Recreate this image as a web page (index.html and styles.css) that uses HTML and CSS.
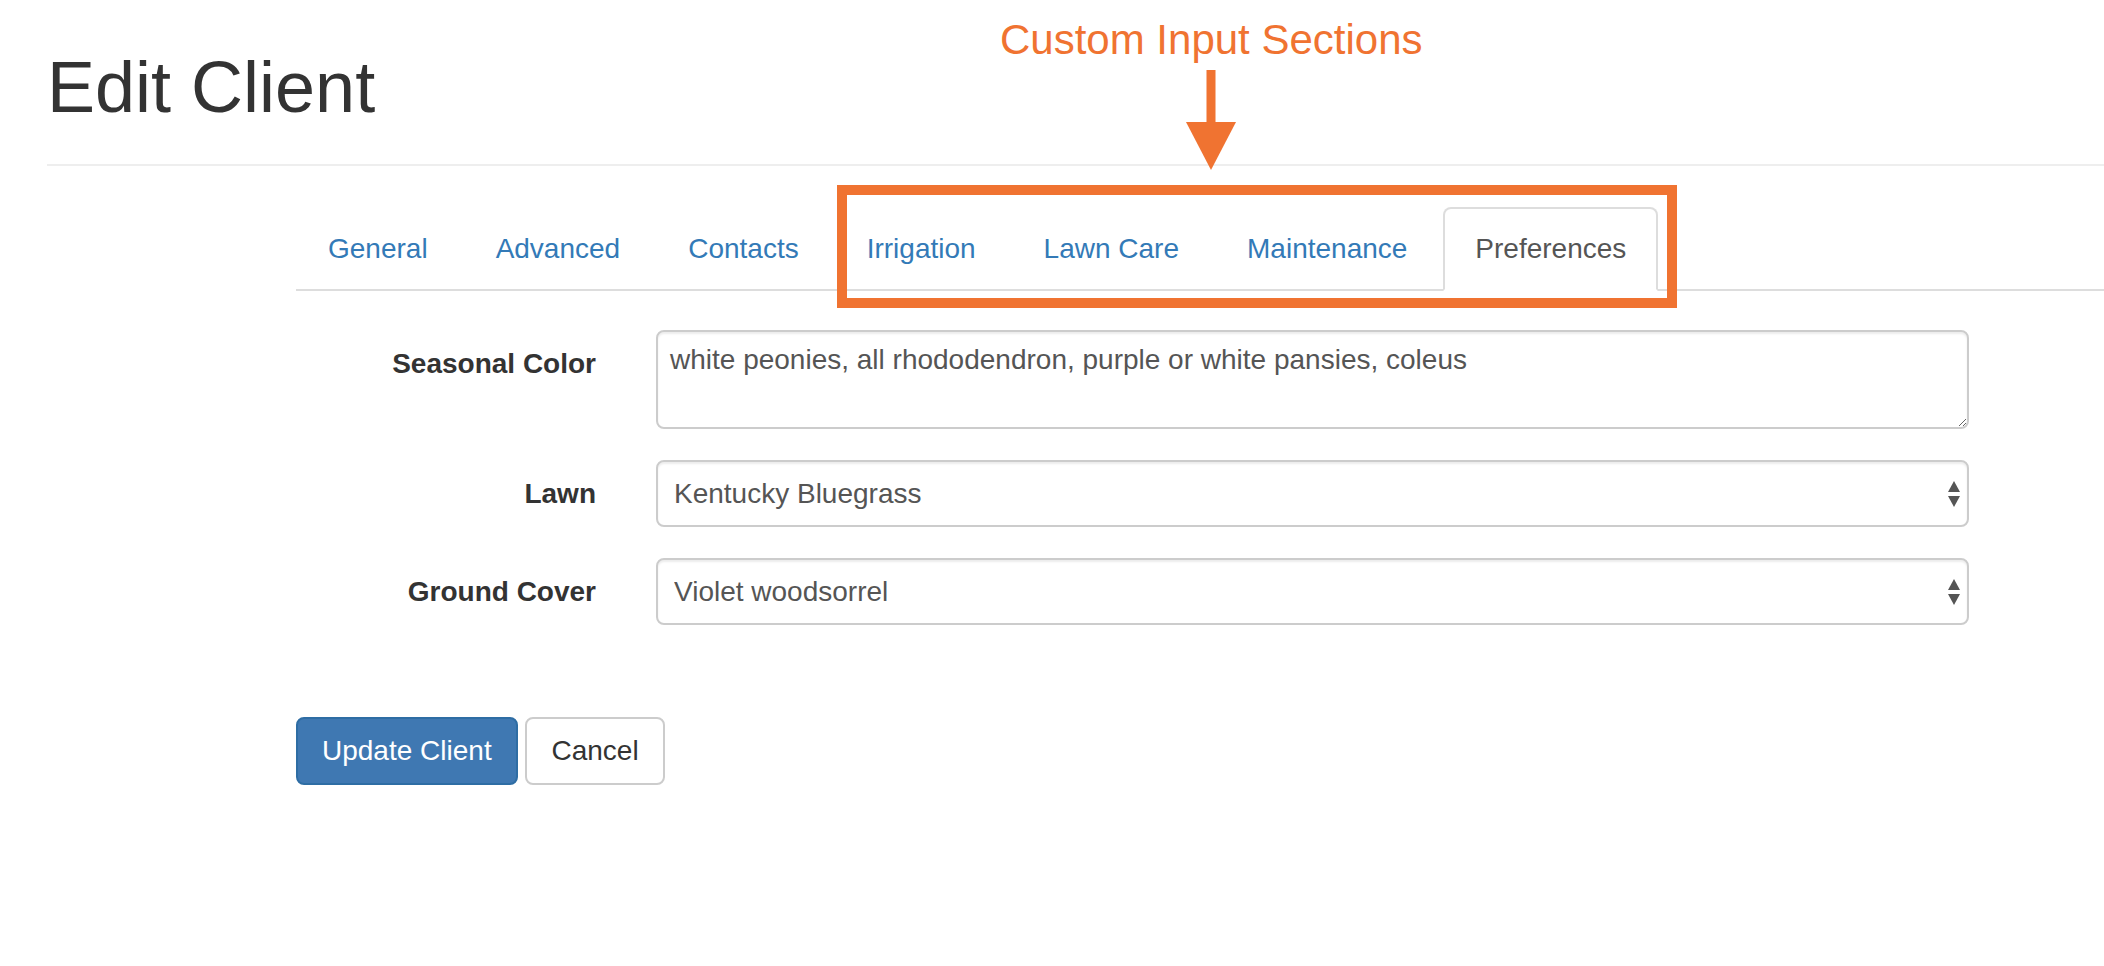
FILE: index.html
```html
<!DOCTYPE html>
<html>
  <head>
    <link rel="stylesheet" href="styles.css">
  </head>
  <body>
    <div class="page-header">
      <h1>Edit Client</h1>
    </div>
    <div class="content">
      <ul class="nav-tabs">
        <li><a href="#">General</a></li>
        <li><a href="#">Advanced</a></li>
        <li><a href="#">Contacts</a></li>
        <li><a href="#">Irrigation</a></li>
        <li><a href="#">Lawn Care</a></li>
        <li><a href="#">Maintenance</a></li>
        <li class="active"><a href="#">Preferences</a></li>
      </ul>
      <form class="client-form">
        <div class="form-row">
          <label for="seasonalColor">Seasonal Color</label>
          <textarea id="seasonalColor" class="form-control">white peonies, all rhododendron, purple or white pansies, coleus</textarea>
        </div>
        <div class="form-row">
          <label for="lawn">Lawn</label>
          <div class="select-wrap">
            <select id="lawn" class="form-control">
              <option>Kentucky Bluegrass</option>
            </select>
            <svg class="select-arrows" width="12" height="26" viewBox="0 0 12 26"><polygon points="6,0 12,11 0,11" /><polygon points="0,15 12,15 6,26" /></svg>
          </div>
        </div>
        <div class="form-row">
          <label for="groundCover">Ground Cover</label>
          <div class="select-wrap">
            <select id="groundCover" class="form-control">
              <option>Violet woodsorrel</option>
            </select>
            <svg class="select-arrows" width="12" height="26" viewBox="0 0 12 26"><polygon points="6,0 12,11 0,11" /><polygon points="0,15 12,15 6,26" /></svg>
          </div>
        </div>
        <div class="actions">
          <button type="submit" class="btn btn-primary">Update Client</button>
          <a href="#" class="btn btn-default">Cancel</a>
        </div>
      </form>
    </div>

    <!-- annotation layered over the screenshot -->
    <div class="callout-label">Custom Input Sections</div>
    <svg class="callout-arrow" width="50" height="100" viewBox="0 0 50 100">
      <rect x="20.5" y="0" width="9" height="53" />
      <polygon points="0,52 50,52 25,100" />
    </svg>
    <div class="callout-box"></div>
  </body>
</html>
```

FILE: styles.css
```css
body {
  margin: 0;
  position: relative;
  font-family: "Liberation Sans", Arial, sans-serif;
  font-size: 28px;
  line-height: 40px;
  color: #333;
  background: #fff;
}
.page-header {
  margin: 0 0 41px 47px;
  padding: 48px 0 17px 0;
  border-bottom: 2px solid #eee;
}
h1 {
  margin: 0 0 20px 0;
  font-size: 72px;
  line-height: 79px;
  font-weight: normal;
}
.content {
  padding-left: 296px;
}
.nav-tabs {
  display: flex;
  list-style: none;
  margin: 0;
  padding: 0;
  border-bottom: 2px solid #ddd;
}
.nav-tabs li {
  margin-bottom: -2px;
}
.nav-tabs a {
  display: block;
  padding: 20px 30px;
  margin-right: 4px;
  border: 2px solid transparent;
  border-radius: 8px 8px 0 0;
  color: #337ab7;
  text-decoration: none;
}
.nav-tabs .active a {
  color: #555;
  background: #fff;
  border-color: #ddd #ddd transparent;
}
.client-form {
  margin: 39px 135px 0 0;
}
.form-row {
  display: flex;
  margin-bottom: 31px;
}
.form-row label {
  width: 300px;
  margin-right: 60px;
  padding-top: 14px;
  text-align: right;
  font-weight: bold;
  flex-shrink: 0;
}
.form-control {
  display: block;
  box-sizing: border-box;
  width: 100%;
  font-family: inherit;
  font-size: 28px;
  line-height: 40px;
  color: #555;
  background: #fff;
  border: 2px solid #ccc;
  border-radius: 8px;
  box-shadow: inset 0 2px 2px rgba(0, 0, 0, 0.075);
  margin: 0;
}
textarea.form-control {
  flex: 1;
  height: 99px;
  padding: 8px 12px;
  resize: both;
}
.select-wrap {
  flex: 1;
  position: relative;
}
select.form-control {
  height: 67px;
  padding: 0 40px 0 16px;
  appearance: none;
  -webkit-appearance: none;
}
.select-arrows {
  position: absolute;
  right: 9px;
  top: 21px;
  fill: #555;
  pointer-events: none;
}
.actions {
  margin-top: 92px;
}
.btn {
  display: inline-block;
  box-sizing: border-box;
  padding: 12px 24px;
  font-family: inherit;
  font-size: 28px;
  line-height: 40px;
  border: 2px solid transparent;
  border-radius: 8px;
  text-decoration: none;
  vertical-align: middle;
  cursor: pointer;
}
.btn-primary {
  color: #fff;
  background: #3f78b2;
  border-color: #2e6da4;
}
.btn-default {
  color: #333;
  background: #fff;
  border-color: #ccc;
}
.callout-label {
  position: absolute;
  left: 1000px;
  top: 19px;
  font-size: 42px;
  line-height: 42px;
  color: #f07331;
}
.callout-arrow {
  position: absolute;
  left: 1186px;
  top: 70px;
  fill: #f07331;
}
.callout-box {
  position: absolute;
  left: 837px;
  top: 185px;
  width: 840px;
  height: 123px;
  box-sizing: border-box;
  border: 10px solid #f07331;
}
```
